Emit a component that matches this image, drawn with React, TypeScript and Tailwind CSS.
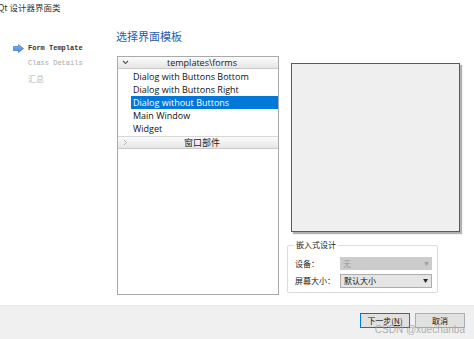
import React from 'react';

const cjk = '"Noto Sans CJK SC", sans-serif';
const ui = '"Open Sans", "Noto Sans CJK SC", sans-serif';

const templates = [
  'Dialog with Buttons Bottom',
  'Dialog with Buttons Right',
  'Dialog without Buttons',
  'Main Window',
  'Widget',
];

const ChevronDown = () => (
  <svg width="7" height="5" viewBox="0 0 7 5" className="shrink-0">
    <path d="M1 1 L3.5 3.5 L6 1" fill="none" stroke="#555" strokeWidth="1.1" />
  </svg>
);

const ChevronRight = () => (
  <svg width="5" height="7" viewBox="0 0 5 7" className="shrink-0">
    <path d="M1 1 L3.5 3.5 L1 6" fill="none" stroke="#b0b0b0" strokeWidth="1" />
  </svg>
);

const NavArrow = () => (
  <svg width="11" height="9" viewBox="0 0 11 9" className="shrink-0">
    <defs>
      <linearGradient id="ar" x1="0" y1="0" x2="0" y2="1">
        <stop offset="0" stopColor="#8dbbf0" />
        <stop offset="1" stopColor="#3a7fd0" />
      </linearGradient>
    </defs>
    <path d="M0.5 2.5 H5.5 V0.5 L10.5 4.5 L5.5 8.5 V6.5 H0.5 Z" fill="url(#ar)" stroke="#2f6bb5" strokeWidth="0.6" />
  </svg>
);

const GroupHeader = ({ label, open }: { label: string; open: boolean }) => (
  <div className="h-[12px] flex items-center px-[3px] bg-gradient-to-b from-[#fbfbfb] to-[#e6e6e6] border-b border-[#c9c9c9]">
    <div className="w-[8px] flex justify-center">{open ? <ChevronDown /> : <ChevronRight />}</div>
    <div className="flex-1 text-center text-[9px] leading-[11px] text-[#222]" style={{ fontFamily: open ? ui : cjk }}>
      {label}
    </div>
  </div>
);

export default function App() {
  return (
    <div className="w-[474px] h-[339px] bg-white flex flex-col overflow-hidden relative" style={{ fontFamily: ui }}>
      <div className="h-[305px] flex flex-col">
        <div className="h-[16px] -ml-[2px] text-[8.5px] leading-[14px] text-[#333]" style={{ fontFamily: cjk }}>
          Qt 设计器界面类
        </div>
        <div className="flex">
          <nav className="w-[117px] pl-[13px] pt-[25px] flex flex-col">
            <div className="h-[15px] flex items-center gap-[4px]">
              <NavArrow />
              <span className="text-[7px] font-bold text-[#333]" style={{ fontFamily: '"Liberation Mono", monospace' }}>
                Form Template
              </span>
            </div>
            <div className="h-[15px] flex items-center pl-[15px]">
              <span className="text-[7px] text-[#a8a8a8]" style={{ fontFamily: '"Liberation Mono", monospace' }}>
                Class Details
              </span>
            </div>
            <div className="h-[15px] flex items-center pl-[15px]">
              <span className="text-[8px] text-[#b5b5b5]" style={{ fontFamily: cjk }}>
                汇总
              </span>
            </div>
          </nav>

          <div className="w-[162px] flex flex-col">
            <h1 className="mt-[12px] mb-[12px] -ml-[1px] h-[16px] text-[11px] leading-[16px] text-[#1f5cb0]" style={{ fontFamily: cjk }}>
              选择界面模板
            </h1>
            <div className="h-[239px] border border-[#a9a9a9] bg-white flex flex-col">
              <GroupHeader label="templates\forms" open />
              <div className="flex flex-col pt-[1px]">
                {templates.map((t) => (
                  <div
                    key={t}
                    className={`ml-[13px] h-[13px] pl-[2px] flex items-center text-[9px] leading-[13px] ${
                      t === 'Dialog without Buttons' ? 'bg-[#0078d7] text-white' : 'text-[#111]'
                    }`}
                  >
                    {t}
                  </div>
                ))}
              </div>
              <div className="mt-[1px] border-t border-[#d8d8d8]">
                <GroupHeader label="窗口部件" open={false} />
              </div>
            </div>
          </div>

          <div className="ml-[8px] flex flex-col">
            <div className="ml-[4px] mt-[47px] w-[169px] h-[169px] bg-[#efefef] border border-[#5a5a5a] shadow-[2px_2px_1px_rgba(0,0,0,0.3)]" />
            <div className="mt-[13px] relative w-[151px] h-[48px] border border-[#dcdcdc] rounded-[2px] pt-[11px] pl-[7px] flex flex-col gap-[4px]">
              <span className="absolute -top-[7px] left-[6px] px-[2px] bg-white text-[8px] leading-[12px] text-[#222]" style={{ fontFamily: cjk }}>
                嵌入式设计
              </span>
              <div className="flex items-center h-[13px]">
                <span className="w-[45px] text-[8px] text-[#222]" style={{ fontFamily: cjk }}>设备：</span>
                <div className="w-[92px] h-[13px] bg-[#cccccc] flex items-center justify-between px-[3px]">
                  <span className="text-[8px] text-[#9a9a9a]" style={{ fontFamily: cjk }}>无</span>
                  <span className="text-[5px] text-[#a0a0a0]">▼</span>
                </div>
              </div>
              <div className="flex items-center h-[14px]">
                <span className="w-[45px] text-[8px] text-[#222]" style={{ fontFamily: cjk }}>屏幕大小：</span>
                <div className="w-[92px] h-[14px] bg-[#e5e5e5] border border-[#adadad] flex items-center justify-between px-[3px]">
                  <span className="text-[8px] text-[#111]" style={{ fontFamily: cjk }}>默认大小</span>
                  <span className="text-[5px] text-[#222]">▼</span>
                </div>
              </div>
            </div>
          </div>
        </div>
      </div>

      <footer className="h-[34px] bg-[#f0f0f0] border-t border-[#e9e9e9] flex justify-end items-start pt-[7px] pr-[9px] gap-[5px]">
        <button className="w-[50px] h-[15px] bg-[#e1e1e1] border border-[#0078d7] text-[8px] leading-[13px] text-[#111]" style={{ fontFamily: cjk }}>
          下一步(<span className="underline">N</span>)
        </button>
        <button className="w-[50px] h-[15px] bg-[#e1e1e1] border border-[#adadad] text-[8px] leading-[13px] text-[#111]" style={{ fontFamily: cjk }}>
          取消
        </button>
      </footer>

      <span className="absolute right-[9px] bottom-[3px] text-[10px] leading-[12px] text-[#9a9a9a]/80 pointer-events-none" style={{ fontFamily: '"Liberation Sans", sans-serif' }}>
        CSDN @xuechanba
      </span>
    </div>
  );
}
